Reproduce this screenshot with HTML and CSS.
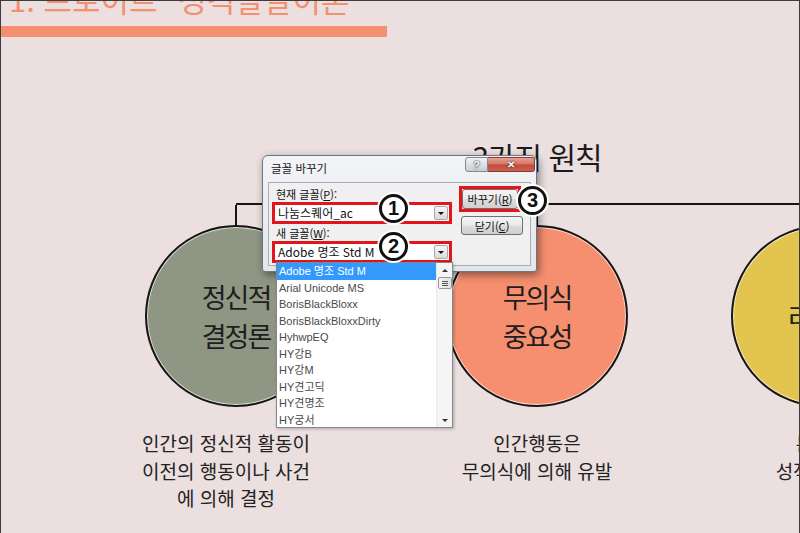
FILE: index.html
```html
<!DOCTYPE html>
<html lang="ko">
<head>
<meta charset="utf-8">
<title>프로이트 성격발달이론</title>
<link rel="stylesheet" href="styles.css">
</head>
<body>
<div class="slide">
  <h1 class="title">1. 프로이트 <span class="title-word">성격발달이론</span></h1>
  <div class="bar"></div>
  <h2 class="heading">3가지 원칙</h2>
  <div class="rail"></div>
  <div class="nodes">
    <div class="node node-1">
      <div class="stem"></div>
      <div class="circle c-green">정신적<br>결정론</div>
      <p class="caption caption-shift">인간의 정신적 활동이<br>이전의 행동이나 사건<br>에 의해 결정</p>
    </div>
    <div class="node node-2">
      <div class="stem"></div>
      <div class="circle c-orange">무의식<br>중요성</div>
      <p class="caption">인간행동은<br>무의식에 의해 유발</p>
    </div>
    <div class="node node-3">
      <div class="stem"></div>
      <div class="circle c-yellow">리비도</div>
      <p class="caption">본능적<br>성적 에너지</p>
    </div>
  </div>

  <div class="dialog">
    <div class="titlebar">
      <span class="dlg-title">글꼴 바꾸기</span>
      <div class="cap-btns">
        <span class="cap-help">?</span>
        <span class="cap-close">✕</span>
      </div>
    </div>
    <div class="client">
      <div class="left-col">
        <div class="label">현재 글꼴(<u>P</u>):</div>
        <div class="combo"><span class="combo-text">나눔스퀘어_ac</span><span class="drop"></span></div>
        <div class="label label-2">새 글꼴(<u>W</u>):</div>
        <div class="combo"><span class="combo-text">Adobe 명조 Std M</span><span class="drop"></span></div>
      </div>
      <div class="right-col">
        <div class="btn-ring"><div class="btn">바꾸기(<u>R</u>)</div></div>
        <div class="btn btn-close">닫기(<u>C</u>)</div>
      </div>
    </div>
  </div>

  <div class="fontlist">
    <ul class="items">
      <li class="item sel">Adobe 명조 Std M</li>
      <li class="item">Arial Unicode MS</li>
      <li class="item">BorisBlackBloxx</li>
      <li class="item">BorisBlackBloxxDirty</li>
      <li class="item">HyhwpEQ</li>
      <li class="item">HY강B</li>
      <li class="item">HY강M</li>
      <li class="item">HY견고딕</li>
      <li class="item">HY견명조</li>
      <li class="item">HY궁서</li>
    </ul>
    <div class="scrollbar">
      <span class="arrow-up"></span>
      <span class="thumb"><i></i><i></i><i></i></span>
      <span class="track"></span>
      <span class="arrow-down"></span>
    </div>
  </div>

  <div class="marker m1">1</div>
  <div class="marker m2">2</div>
  <div class="marker m3">3</div>
</div>
</body>
</html>
```
FILE: styles.css
```css
* { box-sizing: border-box; margin: 0; padding: 0; }
html, body { width: 800px; height: 533px; overflow: hidden; background: #ebdfdf; }
body { font-family: "Noto Sans CJK KR", "Noto Sans", sans-serif; }

.slide {
  position: relative;
  width: 800px;
  height: 533px;
  overflow: hidden;
  background: #ebdfdf;
  border-top: 1px solid #3c3c3c;
  border-left: 1px solid #3c3c3c;
  border-right: 1px solid #3c3c3c;
}

.title {
  margin-top: -18px;
  padding-left: 8px;
  font-size: 31px;
  line-height: 31px;
  font-weight: 400;
  color: #f4906f;
  white-space: nowrap;
}
.title-word { margin-left: 12px; }
.bar { margin-top: 12px; width: 386px; height: 11px; background: #f4906f; }

.heading {
  margin: 99px 0 0 436px;
  width: 200px;
  text-align: center;
  font-size: 30px;
  line-height: 40px;
  font-weight: 400;
  letter-spacing: -1px;
  color: #1b1b1b;
  white-space: nowrap;
}
.rail { margin: 27px 0 0 235px; border-top: 2px solid #151515; }

.nodes { display: flex; }
.node { flex: 0 0 200px; min-width: 0; display: flex; flex-direction: column; align-items: center; }
.node-1 { margin-left: 135px; }
.node-2 { margin-left: 101px; }
.node-3 { margin-left: 85px; }
.stem { width: 2px; height: 20px; background: #151515; }
.circle {
  width: 182px;
  height: 182px;
  flex: 0 0 auto;
  border-radius: 50%;
  border: 2px solid #161616;
  box-shadow: inset 0 0 0 1px rgba(255,255,255,.7);
  display: flex;
  align-items: center;
  justify-content: center;
  text-align: center;
  font-size: 27px;
  line-height: 39px;
  letter-spacing: -2px;
  color: #1e1e1e;
}
.c-green { background: #8f9784; }
.c-orange { background: #f58f6f; }
.c-yellow { background: #e2c44f; }
.caption {
  margin-top: 22px;
  width: 200px;
  text-align: center;
  font-size: 19px;
  line-height: 27.5px;
  letter-spacing: 0;
  color: #222;
  white-space: nowrap;
}
.caption-shift { width: 180px; margin-right: 20px; }

/* dialog */
.dialog {
  position: absolute;
  left: 261px;
  top: 154px;
  width: 275px;
  height: 117px;
  padding: 0 5px 5px;
  border: 1px solid #6d7680;
  border-radius: 6px 6px 3px 3px;
  background: linear-gradient(#f3f4f7, #e3e6eb);
  box-shadow: 2px 3px 9px rgba(0,0,0,.45);
  display: flex;
  flex-direction: column;
  z-index: 2;
  font-family: "Liberation Sans", "Noto Sans CJK KR", sans-serif;
  color: #111;
}
.titlebar { height: 26px; display: flex; align-items: flex-start; }
.dlg-title { flex: 1; padding-left: 3px; line-height: 25px; font-size: 11.5px; color: #222; font-family: "Noto Sans CJK KR", sans-serif; }
.cap-btns { display: flex; margin: 1px -4px 0 0; }
.cap-help, .cap-close {
  height: 15px;
  display: flex;
  align-items: center;
  justify-content: center;
  font-weight: bold;
  font-size: 11px;
  color: #fff;
  text-shadow: 0 0 2px #333, 0 0 1px #333;
}
.cap-help {
  width: 23px;
  border: 1px solid #7f8791;
  border-radius: 3px 0 0 3px;
  background: linear-gradient(#f1f2f4, #c9ced5);
}
.cap-close {
  width: 47px;
  border: 1px solid #8a3a33;
  border-left: 0;
  border-radius: 0 3px 3px 0;
  background: linear-gradient(#e6a195 0%, #d77566 45%, #c24a38 55%, #c8624f 100%);
  font-size: 10px;
}
.client {
  flex: 1;
  background: #f0f0f0;
  border: 1px solid #a8adb5;
  display: flex;
  gap: 7px;
  padding: 3px 0 0 3px;
}
.left-col { width: 180px; padding-top: 2px; }
.label { font-size: 11px; line-height: 13px; padding-left: 4px; color: #111; font-family: "Noto Sans CJK KR", sans-serif; white-space: nowrap; }
.label-2 { margin-top: 3px; }
.combo {
  width: 180px;
  height: 22px;
  margin-top: 1px;
  border: 3px solid #e3151c;
  background: #fff;
  display: flex;
  align-items: center;
  padding-left: 3px;
  font-size: 12px;
  font-family: "Noto Sans CJK KR", sans-serif;
  white-space: nowrap;
}
.combo-text { flex: 1; line-height: 14px; }
.drop {
  width: 14px;
  height: 14px;
  margin-right: 1px;
  border: 1px solid #a9a9a9;
  border-radius: 2px;
  background: linear-gradient(#f6f6f6, #dadada);
  display: flex;
  align-items: center;
  justify-content: center;
}
.drop::after {
  content: "";
  border-left: 3px solid transparent;
  border-right: 3px solid transparent;
  border-top: 3px solid #111;
}
.right-col { display: flex; flex-direction: column; }
.btn-ring { width: 62px; height: 26px; border: 3px solid #e3151c; }
.btn {
  width: 100%;
  height: 100%;
  border: 1px solid #707070;
  border-radius: 3px;
  background: linear-gradient(#f3f3f3 0%, #ebebeb 48%, #dddddd 52%, #cfcfcf 100%);
  display: flex;
  align-items: center;
  justify-content: center;
  font-size: 11px;
  font-family: "Noto Sans CJK KR", sans-serif;
  white-space: nowrap;
  color: #111;
}
.btn-close { width: 62px; height: 19px; margin: 4px 0 0 2px; }

/* dropdown list */
.fontlist {
  position: absolute;
  left: 275px;
  top: 261px;
  width: 177px;
  height: 166px;
  background: #fff;
  border: 1px solid #828790;
  display: flex;
  overflow: hidden;
  z-index: 3;
  font-family: "Liberation Sans", "Noto Sans CJK KR", sans-serif;
  font-size: 11px;
  box-shadow: 1px 1px 3px rgba(0,0,0,.25);
}
.items { flex: 1; list-style: none; }
.item { height: 16.5px; line-height: 16.5px; padding-left: 2px; color: #4a4a4a; white-space: nowrap; }
.item.sel { background: #3399ff; color: #fff; }
.scrollbar {
  width: 16px;
  background: #f5f5f5;
  border-left: 1px solid #ececec;
  display: flex;
  flex-direction: column;
  align-items: center;
}
.arrow-up, .arrow-down { width: 15px; height: 14px; display: flex; align-items: center; justify-content: center; }
.arrow-up::after {
  content: "";
  border-left: 3px solid transparent;
  border-right: 3px solid transparent;
  border-bottom: 3px solid #333;
}
.arrow-down::after {
  content: "";
  border-left: 3px solid transparent;
  border-right: 3px solid transparent;
  border-top: 3px solid #333;
}
.thumb {
  width: 14px;
  height: 12px;
  border: 1px solid #979797;
  border-radius: 2px;
  background: linear-gradient(90deg, #f4f4f4, #e0e0e0);
  display: flex;
  flex-direction: column;
  justify-content: center;
  align-items: center;
  gap: 1px;
}
.thumb i { display: block; width: 6px; height: 1px; background: #555; }
.track { flex: 1; }

/* numbered markers */
.marker {
  position: absolute;
  width: 29px;
  height: 29px;
  border-radius: 50%;
  border: 3px solid #111;
  background: #fff;
  box-shadow: 0 0 0 2px #fff;
  font: bold 20px/23px "Liberation Sans", sans-serif;
  text-align: center;
  color: #111;
  z-index: 4;
}
.m1 { left: 378px; top: 193px; }
.m2 { left: 378px; top: 231px; }
.m3 { left: 517px; top: 185px; }
```
